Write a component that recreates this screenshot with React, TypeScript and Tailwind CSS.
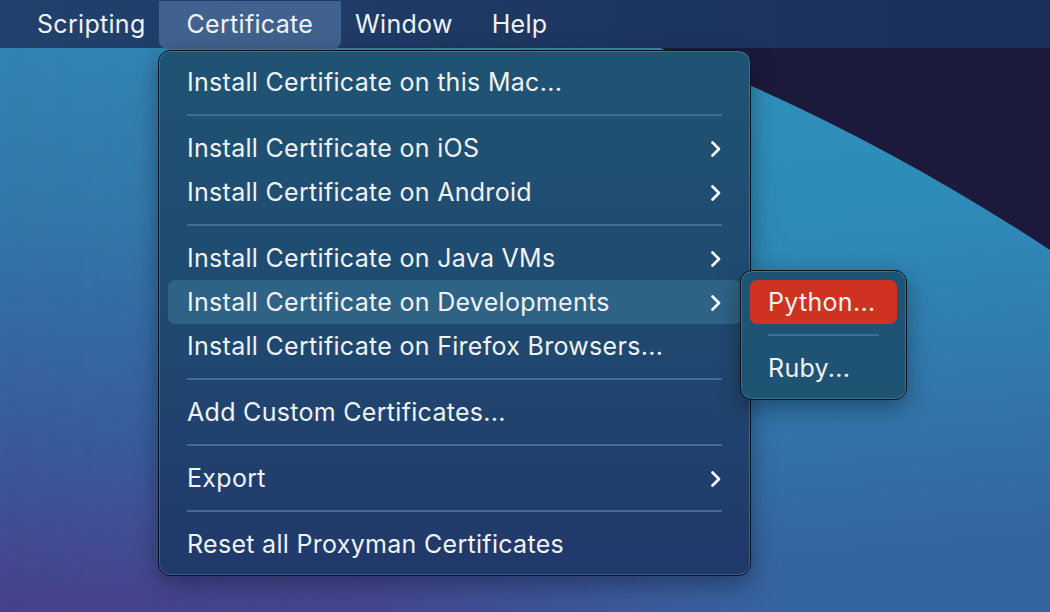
import React from 'react';

type Row =
  | { kind: 'item'; label: string; sub?: boolean; active?: boolean }
  | { kind: 'sep' };

const rows: Row[] = [
  { kind: 'item', label: 'Install Certificate on this Mac...' },
  { kind: 'sep' },
  { kind: 'item', label: 'Install Certificate on iOS', sub: true },
  { kind: 'item', label: 'Install Certificate on Android', sub: true },
  { kind: 'sep' },
  { kind: 'item', label: 'Install Certificate on Java VMs', sub: true },
  { kind: 'item', label: 'Install Certificate on Developments', sub: true, active: true },
  { kind: 'item', label: 'Install Certificate on Firefox Browsers...' },
  { kind: 'sep' },
  { kind: 'item', label: 'Add Custom Certificates...' },
  { kind: 'sep' },
  { kind: 'item', label: 'Export', sub: true },
  { kind: 'sep' },
  { kind: 'item', label: 'Reset all Proxyman Certificates' },
];

const Chevron = () => (
  <svg width="12" height="18" viewBox="0 0 12 18" className="shrink-0">
    <polyline points="2.5,2.5 9,9 2.5,15.5" fill="none" stroke="#ffffff" strokeWidth="2.7" strokeLinecap="round" strokeLinejoin="round" />
  </svg>
);

const Wallpaper = () => (
  <svg className="absolute inset-0" width="1050" height="612" viewBox="0 0 1050 612">
    <defs>
      <linearGradient id="leftGrad" x1="0" y1="0" x2="0" y2="1">
        <stop offset="0" stopColor="#3287b6" />
        <stop offset="0.35" stopColor="#3277aa" />
        <stop offset="0.7" stopColor="#385c9c" />
        <stop offset="1" stopColor="#48408c" />
      </linearGradient>
      <linearGradient id="rightGrad" x1="0" y1="0" x2="0.15" y2="1">
        <stop offset="0" stopColor="#3097bf" />
        <stop offset="0.5" stopColor="#2e89b7" />
        <stop offset="1" stopColor="#3565a1" />
      </linearGradient>
      <linearGradient id="fadeIn" x1="0" y1="0" x2="1" y2="0">
        <stop offset="0" stopColor="#ffffff" stopOpacity="0" />
        <stop offset="0.35" stopColor="#ffffff" stopOpacity="0.15" />
        <stop offset="0.75" stopColor="#ffffff" stopOpacity="1" />
        <stop offset="1" stopColor="#ffffff" stopOpacity="1" />
      </linearGradient>
      <mask id="rightMask">
        <rect width="1050" height="612" fill="url(#fadeIn)" />
      </mask>
    </defs>
    <rect width="1050" height="612" fill="url(#leftGrad)" />
    <rect width="1050" height="612" fill="url(#rightGrad)" mask="url(#rightMask)" />
    <path d="M660,0 L660,48 Q860,125 1050,250 L1050,0 Z" fill="#1b1a3d" />
  </svg>
);

export default function App() {
  return (
    <div
      className="relative w-[1050px] h-[612px] overflow-hidden text-[#f0f2f5]"
      style={{ fontFamily: 'Inter, "Noto Sans", sans-serif' }}
    >
      <Wallpaper />

      {/* menu bar */}
      <div className="relative flex items-center h-12 pt-[1px] bg-gradient-to-r from-[#21416c] to-[#1a2f59] text-[25px] tracking-[0.3px]">
        <span className="ml-[37px]">Scripting</span>
        <span className="ml-[13px] h-12 flex items-center px-[28px] rounded-b-[8px] bg-[#41628e]">Certificate</span>
        <span className="ml-[14px]">Window</span>
        <span className="ml-[39px]">Help</span>
      </div>

      {/* dropdown */}
      <div className="absolute left-[158px] top-[50px] w-[593px] rounded-[12px] border border-[#0b1220] bg-gradient-to-b from-[#1f5373] via-[#1f4a70] to-[#21386a] shadow-[inset_0_0_0_1px_rgba(120,160,200,0.35),0_8px_24px_rgba(0,0,0,0.35)] py-[9px] px-[9px]">
        {rows.map((r, i) =>
          r.kind === 'sep' ? (
            <div key={i} className="h-[22px] flex items-center px-[19px]">
              <div className="h-[2px] w-full bg-[#3f6d93]" />
            </div>
          ) : (
            <div
              key={i}
              className={
                'h-[44px] flex items-center justify-between pl-[19px] pr-[19px] pt-[1px] rounded-[7px] text-[25px] tracking-[0.3px] ' +
                (r.active ? 'bg-[#2f6386]' : '')
              }
            >
              <span>{r.label}</span>
              {r.sub && <Chevron />}
            </div>
          )
        )}
      </div>

      {/* submenu */}
      <div className="absolute left-[740px] top-[270px] w-[167px] rounded-[12px] border border-[#0b1220] bg-[#1f5374] shadow-[inset_0_0_0_1px_rgba(120,160,200,0.35),0_8px_24px_rgba(0,0,0,0.35)] p-[9px] text-[25px] tracking-[0.3px]">
        <div className="h-[44px] flex items-center pl-[18px] pt-[1px] rounded-[7px] bg-[#cf3220]">Python...</div>
        <div className="h-[22px] flex items-center px-[18px]">
          <div className="h-[2px] w-full bg-[#3f6d93]" />
        </div>
        <div className="h-[44px] flex items-center pl-[18px] pt-[1px]">Ruby...</div>
      </div>
    </div>
  );
}
